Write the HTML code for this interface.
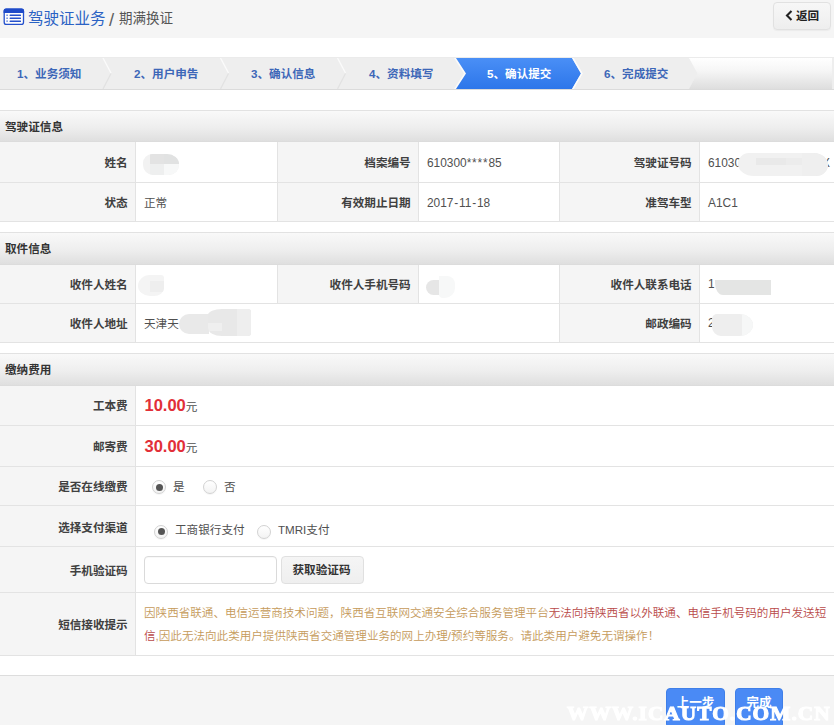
<!DOCTYPE html>
<html lang="zh-CN">
<head>
<meta charset="utf-8">
<title>期满换证</title>
<style>
*{box-sizing:border-box;margin:0;padding:0}
html,body{width:834px;height:725px;overflow:hidden;background:#fff}
body{position:relative;font-family:"Liberation Sans","Noto Sans CJK SC",sans-serif;font-size:11.6px;color:#333}
.abs{position:absolute}
/* header */
#hdr{left:0;top:0;width:834px;height:38px;background:#f5f5f5}
#hdr .ttl{left:28px;top:8.5px;font-size:15.5px;line-height:20px;color:#2a62c4;white-space:nowrap}
#hdr .sub{left:119px;top:10px;font-size:13.5px;line-height:18px;color:#555;white-space:nowrap}
#hdr .sl{left:109px;top:9.5px;font-size:18.5px;line-height:20px;color:#606060;white-space:nowrap;font-family:"Liberation Sans",sans-serif}
#back{left:773px;top:2px;width:58px;height:28px;border:1px solid #e1e1e1;border-radius:4px;background:linear-gradient(#f7f7f7,#eeeeee);box-shadow:0 1px 1px rgba(0,0,0,.04);font-size:11.6px;font-weight:bold;color:#222;line-height:26px;white-space:nowrap}
#back span{position:absolute;left:22px;top:0}
/* steps */
#steps{left:0;top:57px;width:834px;height:33px;background:#eeeeee;border-top:1px solid #ebebeb;border-bottom:1px solid #dbdbdb}
#steps .tail{left:686px;top:0;width:146px;height:31px;background:linear-gradient(#ffffff 0%,#f6f6f6 40%,#dedede 100%)}
.st{position:absolute;top:0;height:31px;line-height:32px;font-weight:bold;color:#3d67b8;white-space:nowrap;font-size:11.6px}
.st.on{color:#fff}
/* sections */
.sec{position:absolute;left:0;width:834px;height:32px;border-top:1px solid #e2e2e2;border-bottom:1px solid #dcdcdc;background:linear-gradient(#f9f9f9 0%,#eeeeee 55%,#dfdfdf 100%);font-weight:bold;line-height:31px;padding-left:5px;color:#333}
.row{position:absolute;left:0;width:834px;border-bottom:1px solid #e3e3e3;background:#fff}
.lb{position:absolute;top:0;bottom:0;background:#f5f5f5;border-right:1px solid #e3e3e3;border-left:1px solid #e3e3e3;font-weight:bold;text-align:right;padding-right:7.3px;color:#404040;white-space:nowrap}
.lb.first{border-left:none}
.v{position:absolute;top:0;bottom:0;white-space:nowrap;color:#505050}
.v.n{font-size:11.9px}
.v.n s{text-decoration:none;letter-spacing:0.8px}
.v.n u{text-decoration:none;padding:0 0.8px}
.row .lb,.row .v{line-height:var(--lh)}
.mz{position:absolute;overflow:hidden;filter:blur(0.6px)}
.mz i{position:absolute;display:block}
.fee b{color:#e22f38;font-size:16.5px;font-weight:bold;margin-left:0.5px}
.radio{position:absolute;width:14px;height:14px;border-radius:50%;border:1px solid #d2d2d2;background:linear-gradient(#ffffff,#f3f3f3);box-shadow:0 1px 1px rgba(0,0,0,.04)}
.radio.on::after{content:"";position:absolute;left:2.5px;top:2.5px;width:7px;height:7px;border-radius:50%;background:#555}
#ipt{left:144px;top:9px;width:133px;height:28px;border:1px solid #dadada;border-radius:4px;background:#fff;box-shadow:inset 0 1px 1px rgba(0,0,0,.03)}
#getc{left:281px;top:9px;width:83px;height:28px;border:1px solid #e0e0e0;border-radius:4px;background:linear-gradient(#f5f5f5,#efefef);font-weight:bold;text-align:center;line-height:26px;color:#333;padding-right:2px}
#warn{left:144px;top:9px;width:690px;color:#c59a5a;line-height:22.6px;white-space:nowrap;font-size:11.57px;font-weight:350}
#warn i{font-style:normal;color:#b94a48}
/* footer */
#ftr{left:0;top:675px;width:834px;height:50px;background:#f5f5f5;border-top:1px solid #dddddd}
.btn{position:absolute;top:12px;height:40px;background:#4a8af5;border:1px solid #3f7fe8;border-radius:4px;color:#fff;font-size:12.5px;font-weight:bold;text-align:center;line-height:20px;padding-top:4px}
#wm{left:567.300px;top:701px;font-family:"Liberation Serif",serif;font-weight:bold;font-size:18.4px;line-height:26px;color:#fff;white-space:nowrap;letter-spacing:0.9px;-webkit-text-stroke:1px #fff;transform-origin:0 0;transform:scaleX(1.16)}
</style>
</head>
<body>

<div id="hdr" class="abs">
  <svg class="abs" style="left:3px;top:8.400px" width="22" height="18" viewBox="0 0 22 18">
    <rect x="1.200" y="1.200" width="19.300" height="15.200" rx="2.200" fill="#fdfdfd" stroke="#2450cc" stroke-width="1.300"/>
    <path d="M0.600 5 L0.600 3 Q0.600 0.600 3 0.600 L18.700 0.600 Q21.100 0.600 21.100 3 L21.100 5 Z" fill="#1f4bc9"/>
    <g fill="#2450cc">
      <rect x="6.600" y="6.500" width="11.400" height="1.500" rx="0.500"/>
      <rect x="6.600" y="9.500" width="11.400" height="1.500" rx="0.500"/>
      <rect x="6.600" y="12.400" width="11.400" height="1.500" rx="0.500"/>
    </g>
    <g fill="#6f8de0">
      <rect x="3.300" y="6.500" width="1.600" height="1.500"/>
      <rect x="3.300" y="9.500" width="1.600" height="1.500"/>
      <rect x="3.300" y="12.400" width="1.600" height="1.500"/>
    </g>
  </svg>
  <div class="abs ttl">驾驶证业务</div>
  <div class="abs sl">/</div>
  <div class="abs sub">期满换证</div>
  <div id="back" class="abs">
    <svg class="abs" style="left:11px;top:7px" width="9" height="11" viewBox="0 0 9 11"><path d="M6.500 1 L2 5.500 L6.500 10" fill="none" stroke="#222" stroke-width="2.100"/></svg>
    <span>返回</span>
  </div>
</div>

<div id="steps" class="abs">
  <div class="abs tail"></div>
  <svg class="abs" style="left:0;top:0" width="834" height="31" viewBox="0 0 834 31">
    <defs>
      <linearGradient id="bl" x1="0" y1="0" x2="0" y2="1"><stop offset="0" stop-color="#4a8ff6"/><stop offset="1" stop-color="#2d76ea"/></linearGradient>
    </defs>
    <g fill="none" stroke-width="1.300">
      <path d="M103 0 L111 15" stroke="#fbfbfb"/><path d="M111 15.500 L103 31" stroke="#e2e2e2"/>
      <path d="M220.500 0 L228.500 15" stroke="#fbfbfb"/><path d="M228.500 15.500 L220.500 31" stroke="#e2e2e2"/>
      <path d="M337.500 0 L345.500 15" stroke="#fbfbfb"/><path d="M345.500 15.500 L337.500 31" stroke="#e2e2e2"/>
    </g>
    <path d="M454 0 L456 0 L466 15.500 L456 31 L454 31 L464 15.500 Z" fill="#fafafa"/>
    <path d="M456 0 L572 0 L581 15.500 L572 31 L456 31 L466 15.500 Z" fill="url(#bl)"/>
    <path d="M572 0 L574 0 L583 15.500 L574 31 L572 31 L581 15.500 Z" fill="#fcfcfc"/>
    <path d="M574 0 L689 0 L697.500 15.500 L689 31 L574 31 L583 15.500 Z" fill="#eeeeee"/>
  </svg>
  <div class="st" style="left:17px">1、业务须知</div>
  <div class="st" style="left:134px">2、用户申告</div>
  <div class="st" style="left:251px">3、确认信息</div>
  <div class="st" style="left:369px">4、资料填写</div>
  <div class="st on" style="left:487px">5、确认提交</div>
  <div class="st" style="left:604px">6、完成提交</div>
</div>

<!-- section 1 -->
<div class="sec" style="top:110px">驾驶证信息</div>
<div class="row" style="top:142px;height:41px;--lh:42px">
  <div class="lb first" style="left:0;width:136px">姓名</div>
  <div class="mz" style="left:143px;top:12px;width:36px;height:21px;border-radius:9px 12px 10px 10px/9px 10px 10px 10px;background:#f2f2f2"><i style="left:7px;top:0;width:14px;height:10px;background:#e3e3e3"></i><i style="left:21px;top:0;width:15px;height:10px;background:#e1e2e2"></i><i style="left:7px;top:10px;width:14px;height:11px;background:#eeefef"></i><i style="left:21px;top:10px;width:15px;height:11px;background:#f7f8f8"></i></div>
  <div class="lb" style="left:277px;width:142px">档案编号</div>
  <div class="v n" style="left:427px">610300<s>****</s>85</div>
  <div class="lb" style="left:559px;width:141px">驾驶证号码</div>
  <div class="v n" style="left:708px">61030</div>
  <div class="v n" style="left:822px">X</div>
  <div class="mz" style="left:738px;top:11px;width:90px;height:23px;border-radius:11px 14px 12px 16px/11px 12px 11px 12px;background:#f1f1f1"><i style="left:18px;top:5px;width:30px;height:7px;background:#e9e9e9"></i><i style="left:48px;top:5px;width:16px;height:7px;background:#ececec"></i><i style="left:64px;top:0;width:26px;height:23px;background:#efefef"></i></div>
</div>
<div class="row" style="top:183px;height:39px;--lh:40px">
  <div class="lb first" style="left:0;width:136px">状态</div>
  <div class="v" style="left:144px">正常</div>
  <div class="lb" style="left:277px;width:142px">有效期止日期</div>
  <div class="v n" style="left:427px">2017<u>-</u>11<u>-</u>18</div>
  <div class="lb" style="left:559px;width:141px">准驾车型</div>
  <div class="v n" style="left:708px">A1C1</div>
</div>

<!-- section 2 -->
<div class="sec" style="top:232px;height:33px">取件信息</div>
<div class="row" style="top:265px;height:39px;--lh:39px">
  <div class="lb first" style="left:0;width:136px">收件人姓名</div>
  <div class="mz" style="left:138px;top:10px;width:26px;height:21px;border-radius:12px 3px 10px 12px/11px 3px 8px 10px;background:#f4f4f4"><i style="left:12px;top:6px;width:14px;height:11px;background:#eeeeee"></i></div>
  <div class="lb" style="left:277px;width:142px">收件人手机号码</div>
  <div class="mz" style="left:426px;top:15px;width:13px;height:15px;border-radius:8px 0 0 8px;background:#e6e6e6"></div>
  <div class="mz" style="left:439px;top:11px;width:16px;height:22px;border-radius:0 8px 10px 4px;background:#f7f8f8"></div>
  <div class="lb" style="left:559px;width:141px">收件人联系电话</div>
  <div class="v n" style="left:708px">1</div>
  <div class="mz" style="left:715px;top:15px;width:56px;height:14.500px;border-radius:0 0 0 8px/0 0 0 12px;background:#e4e5e4"></div>
</div>
<div class="row" style="top:304px;height:39px;--lh:39px">
  <div class="lb first" style="left:0;width:136px">收件人地址</div>
  <div class="v" style="left:144px">天津天</div>
  <div class="mz" style="left:179px;top:10px;width:30px;height:20px;border-radius:10px 0 0 10px;background:#e9e9e9"></div>
  <div class="mz" style="left:208px;top:5px;width:43px;height:27px;border-radius:14px 3px 3px 14px/6px 3px 3px 8px;background:#e8e8e8"><i style="left:0;top:14px;width:14px;height:8px;background:#efefef"></i><i style="left:29px;top:0;width:14px;height:27px;background:#eeeeee"></i></div>
  <div class="lb" style="left:559px;width:141px">邮政编码</div>
  <div class="v n" style="left:708px">2</div>
  <div class="mz" style="left:711.500px;top:10px;width:41.500px;height:21.500px;border-radius:5px 14px 14px 9px/5px 11px 11px 9px;background:#eeeeee"><i style="left:30.500px;top:0;width:11px;height:22px;background:#f6f7f7"></i></div>
</div>

<!-- section 3 -->
<div class="sec" style="top:353px;height:33px">缴纳费用</div>
<div class="row" style="top:386px;height:40px;--lh:39px">
  <div class="lb first" style="left:0;width:136px">工本费</div>
  <div class="v fee" style="left:144px"><b>10.00</b>元</div>
</div>
<div class="row" style="top:426px;height:41px;--lh:42px">
  <div class="lb first" style="left:0;width:136px">邮寄费</div>
  <div class="v fee" style="left:144px;line-height:40px"><b>30.00</b>元</div>
</div>
<div class="row" style="top:467px;height:39px;--lh:39px">
  <div class="lb first" style="left:0;width:136px">是否在线缴费</div>
  <div class="radio on" style="left:152px;top:13px"></div>
  <div class="v" style="left:173px">是</div>
  <div class="radio" style="left:203px;top:13px"></div>
  <div class="v" style="left:224px">否</div>
</div>
<div class="row" style="top:506px;height:41px;--lh:43px">
  <div class="lb first" style="left:0;width:136px">选择支付渠道</div>
  <div class="radio on" style="left:154px;top:18.500px"></div>
  <div class="v" style="left:175px;line-height:47px">工商银行支付</div>
  <div class="radio" style="left:257px;top:18.500px"></div>
  <div class="v" style="left:278px;line-height:47px">TMRI支付</div>
</div>
<div class="row" style="top:547px;height:46px;--lh:48px">
  <div class="lb first" style="left:0;width:136px">手机验证码</div>
  <div id="ipt" class="abs"></div>
  <div id="getc" class="abs">获取验证码</div>
</div>
<div class="row" style="top:593px;height:63px;--lh:63px">
  <div class="lb first" style="left:0;width:136px">短信接收提示</div>
  <div id="warn" class="abs">因陕西省联通、电信运营商技术问题，陕西省互联网交通安全综合服务管理平台<i>无法向持陕西省以外联通、电信手机号码的用户发送短<br>信</i>,因此无法向此类用户提供陕西省交通管理业务的网上办理/预约等服务。请此类用户避免无谓操作！</div>
</div>

<div id="ftr" class="abs">
  <div class="btn" style="left:666px;width:59px">上一步</div>
  <div class="btn" style="left:735px;width:48px">完成</div>
</div>
<div id="wm" class="abs">WWW.ICAUTO.COM.CN</div>

</body>
</html>
